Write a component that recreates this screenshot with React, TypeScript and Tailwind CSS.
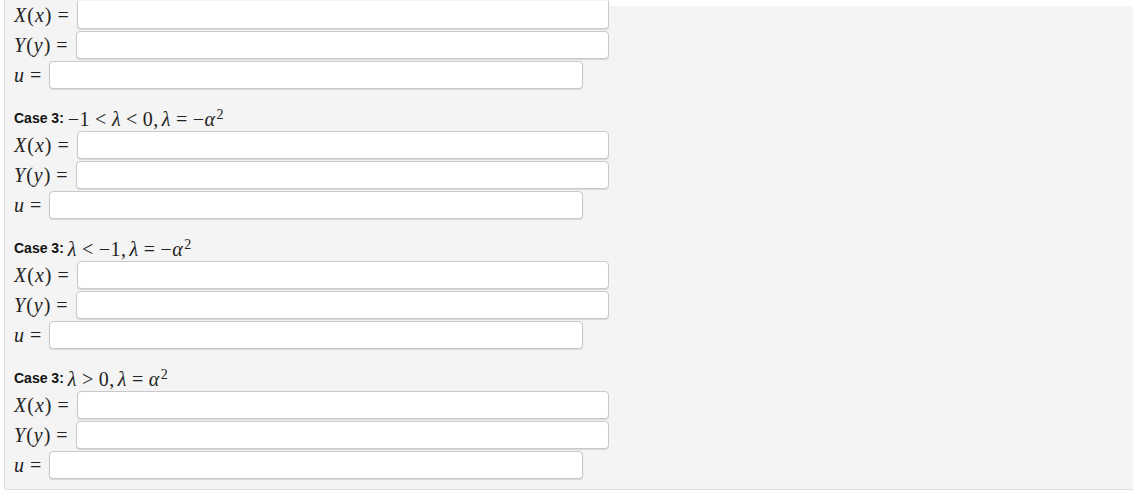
import React from 'react';

const mathFont = { fontFamily: '"Liberation Serif", "DejaVu Serif", serif' };

const V: React.FC<{ children: React.ReactNode }> = ({ children }) => <i className="italic">{children}</i>;

// relation with thick spaces on both sides, like KaTeX
const R: React.FC<{ children: React.ReactNode }> = ({ children }) => (
  <span className="mx-[5px]">{children}</span>
);

const Field: React.FC<{ label: React.ReactNode; first?: boolean }> = ({ label, first }) => (
  <div className="h-[30px] flex items-center">
    <span className="text-[20px] tracking-[1px] text-[#222] whitespace-nowrap leading-none" style={mathFont}>
      {label}
    </span>
    <input
      type="text"
      className={
        'ml-[2px] h-[28px] w-[534px] bg-white border border-[#c9c9c9] rounded-[4px] shadow-[0_1px_1px_rgba(0,0,0,0.12)] outline-none' +
        (first ? ' border-t-0 rounded-t-none' : '')
      }
    />
  </div>
);

const Block: React.FC<{ title?: React.ReactNode; first?: boolean }> = ({ title, first }) => (
  <div className="flex flex-col">
    {title && (
      <div className="h-[20px] flex items-end pb-[1px] whitespace-nowrap">
        <span className="font-bold text-[14px] text-[#111]" style={{ fontFamily: '"Liberation Sans", Arial, sans-serif' }}>
          Case 3:
        </span>
        <span className="ml-[4px] text-[20px] tracking-[0.5px] leading-none text-[#222]" style={mathFont}>
          {title}
        </span>
      </div>
    )}
    <Field
      first={first}
      label={
        <>
          <V>X</V>(<V>x</V>)<R>=</R>
        </>
      }
    />
    <Field
      label={
        <>
          <V>Y</V>(<V>y</V>)<R>=</R>
        </>
      }
    />
    <Field
      label={
        <>
          <V>u</V>
          <R>=</R>
        </>
      }
    />
  </div>
);

const Sq = () => <sup className="text-[14px] -top-[7px] ml-[1px]">2</sup>;

export default function App() {
  return (
    <div className="w-[1133px] h-[490px] bg-white flex pl-[4px] overflow-hidden">
      <div className="w-[605px] h-[490px] bg-[#f4f4f4] border-l border-b border-[#dcdcdc] rounded-bl-[3px] pl-[9px] flex flex-col gap-[20px]">
        <Block first />
        <Block
          title={
            <>
              −1<R>&lt;</R>
              <V>λ</V>
              <R>&lt;</R>0,<span className="ml-[3px]" />
              <V>λ</V>
              <R>=</R>−<V>α</V>
              <Sq />
            </>
          }
        />
        <Block
          title={
            <>
              <V>λ</V>
              <R>&lt;</R>−1,<span className="ml-[3px]" />
              <V>λ</V>
              <R>=</R>−<V>α</V>
              <Sq />
            </>
          }
        />
        <Block
          title={
            <>
              <V>λ</V>
              <R>&gt;</R>0,<span className="ml-[3px]" />
              <V>λ</V>
              <R>=</R>
              <V>α</V>
              <Sq />
            </>
          }
        />
      </div>
      <div className="flex-1 mt-[6px] bg-[#f4f4f4] border-b border-[#dcdcdc]" />
    </div>
  );
}
